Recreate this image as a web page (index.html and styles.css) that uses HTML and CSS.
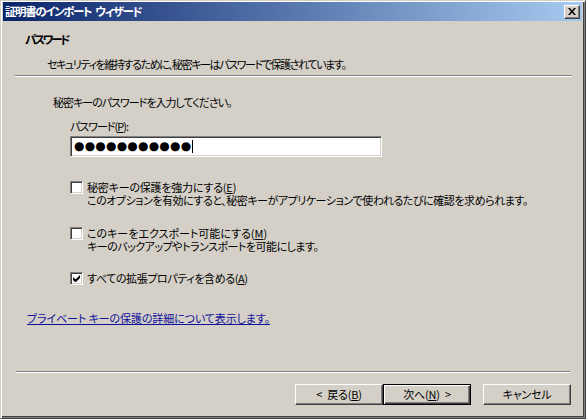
FILE: index.html
```html
<!DOCTYPE html>
<html lang="ja">
<head>
<meta charset="utf-8">
<title>証明書のインポート ウィザード</title>
<link rel="stylesheet" href="styles.css">
</head>
<body>
<div class="window">
  <div class="titlebar">
    <span class="title">証明書のインポート ウィザード</span>
    <span class="close">
      <svg width="8" height="7" viewBox="0 0 8 7"><path d="M0 0h2l2 2.5 2-2.5h2l-3 3.5 3 3.5h-2l-2-2.5-2 2.5h-2l3-3.5z" fill="#000"/></svg>
    </span>
  </div>
  <div class="header">
    <div class="h-title">パスワード</div>
    <div class="h-sub">セキュリティを維持するために、秘密キーはパスワードで保護されています。</div>
  </div>
  <div class="etch etch-top"></div>
  <div class="content">
    <div class="prompt">秘密キーのパスワードを入力してください。</div>
    <div class="field">
      <div class="field-label">パスワード(<u>P</u>):</div>
      <div class="input"><span class="dots">●●●●●●●●●●●</span><span class="caret"></span></div>
    </div>
    <div class="opt opt-1">
      <span class="cb"></span>
      <div class="opt-text">
        <div class="t-strong">秘密キーの保護を強力にする(<u>E</u>)</div>
        <div class="t-desc1">このオプションを有効にすると、秘密キーがアプリケーションで使われるたびに確認を求められます。</div>
      </div>
    </div>
    <div class="opt opt-2">
      <span class="cb"></span>
      <div class="opt-text">
        <div class="t-export">このキーをエクスポート可能にする(<u>M</u>)</div>
        <div class="t-desc2">キーのバックアップやトランスポートを可能にします。</div>
      </div>
    </div>
    <div class="opt opt-3">
      <span class="cb checked">
        <svg width="7" height="7" viewBox="0 0 7 7"><path d="M0 2v3l2 2h1l4-4v-3l-4 4h-1z" fill="#000"/></svg>
      </span>
      <div class="opt-text">
        <div class="t-all">すべての拡張プロパティを含める(<u>A</u>)</div>
      </div>
    </div>
    <a class="link" href="#">プライベート キーの保護の詳細について表示します。</a>
  </div>
  <div class="etch etch-bottom"></div>
  <div class="footer">
    <button class="btn">&lt; 戻る(<u>B</u>)</button>
    <button class="btn default">次へ(<u>N</u>) &gt;</button>
    <button class="btn cancel">キャンセル</button>
  </div>
</div>
</body>
</html>
```
FILE: styles.css
```css
html, body {
  margin: 0;
  padding: 0;
  background: #d4d0c8;
}
body {
  font-family: "Noto Sans CJK JP", "Noto Sans", sans-serif;
  font-size: 11px;
  letter-spacing: -1px;
  line-height: 13px;
  color: #000;
  font-feature-settings: "palt";
}
.window {
  width: 586px;
  height: 419px;
  box-sizing: border-box;
  background: #d4d0c8;
  border-top: 1px solid #d4d0c8;
  border-left: 1px solid #d4d0c8;
  border-right: 1px solid #404040;
  border-bottom: 1px solid #404040;
  box-shadow: inset 1px 1px 0 #fff, inset -1px -1px 0 #808080, inset -2px -2px 0 #404040;
  padding: 1px 3px 3px 2px;
  display: flex;
  flex-direction: column;
}
.titlebar {
  height: 19px;
  background: linear-gradient(to right, #0a246a, #a6caf0);
  display: flex;
  align-items: center;
  justify-content: space-between;
  padding: 0 2px 0 2px;
}
.title {
  color: #fff;
  font-weight: bold;
  font-size: 11.5px;
  letter-spacing: -1.4px;
  word-spacing: 3px;
}
.close {
  width: 16px;
  height: 14px;
  box-sizing: border-box;
  background: #d4d0c8;
  border-top: 1px solid #fff;
  border-left: 1px solid #fff;
  border-right: 1px solid #404040;
  border-bottom: 1px solid #404040;
  box-shadow: inset -1px -1px 0 #808080;
  display: flex;
  align-items: center;
  justify-content: center;
}
.header {
  padding: 12px 0 0 22px;
  height: 42px;
}
.h-title {
  font-weight: bold;
  font-size: 11.5px;
  letter-spacing: -2.2px;
  height: 13px;
}
.h-sub {
  margin: 12px 0 0 22px;
  letter-spacing: -1.4px;
}
.etch {
  height: 1px;
  background: #808080;
  border-bottom: 1px solid #fff;
  margin-right: 10px;
}
.etch-top {
  margin-left: 12px;
  margin-top: 0;
}
.content {
  flex: 1;
  padding: 19px 0 0 50px;
}
.prompt {
  height: 13px;
}
.field {
  margin: 11px 0 0 17px;
}
.field-label {
  height: 13px;
}
.input {
  margin-top: 3px;
  width: 312px;
  height: 21px;
  box-sizing: border-box;
  background: #fff;
  border-top: 1px solid #808080;
  border-left: 1px solid #808080;
  border-right: 1px solid #fff;
  border-bottom: 1px solid #fff;
  box-shadow: inset 1px 1px 0 #404040, inset -1px -1px 0 #d4d0c8;
  display: flex;
  align-items: center;
  padding-left: 3px;
}
.dots {
  font-family: "DejaVu Sans", sans-serif;
  font-size: 12px;
  letter-spacing: 0.2px;
  line-height: 13px;
}
.caret {
  width: 1px;
  height: 13px;
  background: #000;
  margin-left: 1px;
}
.opt {
  display: flex;
  align-items: flex-start;
  margin-left: 17px;
}
.opt-1 { margin-top: 24px; }
.opt-2 { margin-top: 20px; }
.opt-3 { margin-top: 19px; }
.cb {
  width: 13px;
  height: 13px;
  box-sizing: border-box;
  background: #fff;
  border-top: 1px solid #808080;
  border-left: 1px solid #808080;
  border-right: 1px solid #fff;
  border-bottom: 1px solid #fff;
  box-shadow: inset 1px 1px 0 #404040, inset -1px -1px 0 #d4d0c8;
  margin-right: 4px;
  display: flex;
  align-items: center;
  justify-content: center;
  flex: none;
}
.opt-text {
  line-height: 13px;
  white-space: nowrap;
}
.t-strong { letter-spacing: -0.2px; }
.t-desc1 { letter-spacing: -0.45px; }
.t-export { letter-spacing: 0; }
.t-desc2 { letter-spacing: -0.5px; }
.t-all { letter-spacing: -0.4px; }
.link {
  display: block;
  margin: 27px 0 0 -26px;
  color: #10109a;
  text-decoration: underline;
  letter-spacing: -0.1px;
  width: max-content;
}
.etch-bottom {
  margin-left: 13px;
  margin-right: 12px;
}
.footer {
  height: 42px;
  display: flex;
  align-items: flex-start;
  padding: 11px 0 0 292px;
  box-sizing: border-box;
}
.btn {
  width: 88px;
  height: 21px;
  box-sizing: border-box;
  font-family: inherit;
  font-size: 11px;
  letter-spacing: -0.2px;
  word-spacing: 3px;
  font-feature-settings: "palt";
  color: #000;
  background: #d4d0c8;
  border-top: 1px solid #fff;
  border-left: 1px solid #fff;
  border-right: 1px solid #404040;
  border-bottom: 1px solid #404040;
  box-shadow: inset -1px -1px 0 #808080;
  padding: 0;
  margin: 0;
  line-height: 13px;
}
.btn.default {
  border: 1px solid #000;
  box-shadow: inset 1px 1px 0 #fff, inset -1px -1px 0 #404040, inset -2px -2px 0 #808080;
}
.btn.cancel {
  margin-left: 12px;
}
```
